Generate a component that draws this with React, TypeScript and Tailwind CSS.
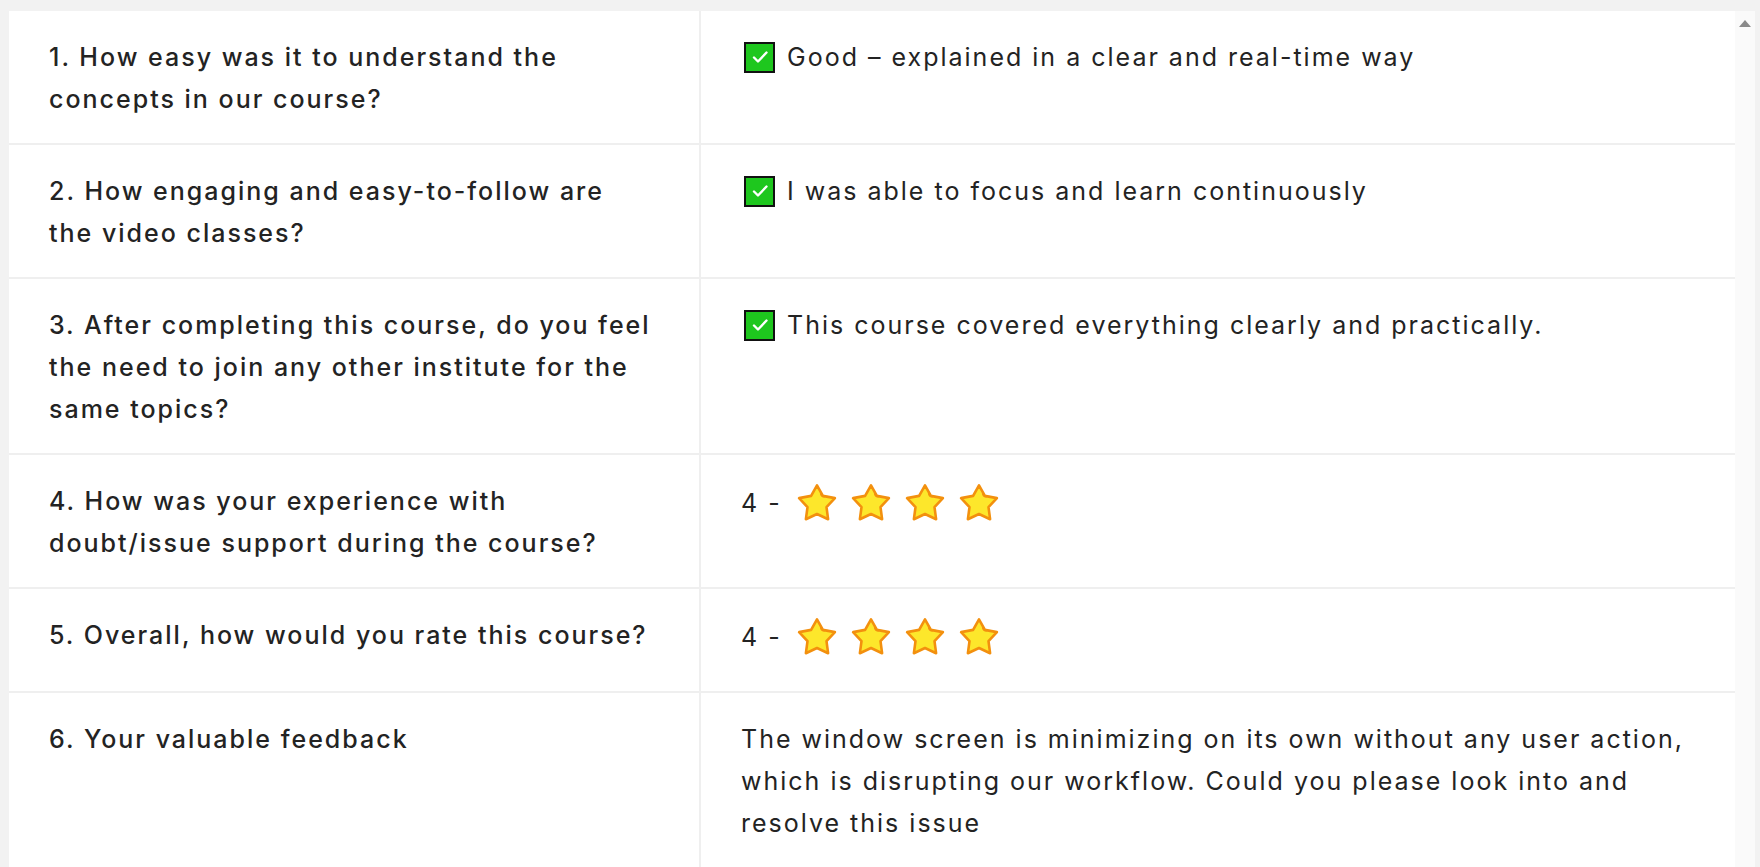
import { FC, ReactNode } from "react";

const Check: FC = () => (
  <span className="inline-flex w-[31px] h-[31px] shrink-0 items-center justify-center border-2 border-[#111] bg-[#1ec71e] ml-[3px] mr-[12px]">
    <svg width="20" height="20" viewBox="0 0 20 20" fill="none">
      <path
        d="M4 10.5l4 4L16.5 5.5"
        stroke="#fff"
        strokeWidth="2.4"
        strokeLinecap="round"
        strokeLinejoin="round"
      />
    </svg>
  </span>
);

const Star: FC = () => (
  <svg width="42" height="40" viewBox="0 0 42 40" fill="none">
    <path
      d="M21 2.4 L26.9 12.9 L38.9 15.1 L30.5 24.1 L32.1 36.2 L21 31 L9.9 36.2 L11.5 24.1 L3.1 15.1 L15.1 12.9 Z"
      fill="#fde72b"
      stroke="#f3900e"
      strokeWidth="2.6"
      strokeLinejoin="round"
    />
    <path
      d="M24.6 10.8 q0.3 3 3.9 3"
      stroke="#f3900e"
      strokeWidth="1.4"
      strokeLinecap="round"
    />
  </svg>
);

const Rating: FC<{ value: number }> = ({ value }) => (
  <div className="flex items-center h-[46px] mb-2">
    <span className="mr-[14px]">{value} -</span>
    <div className="flex items-center gap-[12px]">
      {Array.from({ length: value }).map((_, i) => (
        <Star key={i} />
      ))}
    </div>
  </div>
);

interface iRow {
  q: string;
  a: ReactNode;
  last?: boolean;
}

const Row: FC<iRow> = ({ q, a, last }) => (
  <div className={`flex ${last ? "" : "border-b-2 border-[#efefef]"}`}>
    <div className="w-[692px] shrink-0 border-r-2 border-[#efefef] pl-10 pr-[45px] pt-[25px] pb-[23px] font-medium">
      {q}
    </div>
    <div className="flex-1 pl-10 pr-10 pt-[25px] pb-[23px]">{a}</div>
  </div>
);

const App: FC = () => {
  const rows: iRow[] = [
    {
      q: "1. How easy was it to understand the concepts in our course?",
      a: (
        <div className="flex items-center">
          <Check />
          Good – explained in a clear and real-time way
        </div>
      ),
    },
    {
      q: "2. How engaging and easy-to-follow are the video classes?",
      a: (
        <div className="flex items-center">
          <Check />I was able to focus and learn continuously
        </div>
      ),
    },
    {
      q: "3. After completing this course, do you feel the need to join any other institute for the same topics?",
      a: (
        <div className="flex items-center">
          <Check />
          This course covered everything clearly and practically.
        </div>
      ),
    },
    {
      q: "4. How was your experience with doubt/issue support during the course?",
      a: <Rating value={4} />,
    },
    {
      q: "5. Overall, how would you rate this course?",
      a: <Rating value={4} />,
    },
    {
      q: "6. Your valuable feedback",
      a: "The window screen is minimizing on its own without any user action, which is disrupting our workflow. Could you please look into and resolve this issue",
      last: true,
    },
  ];

  return (
    <div
      className="h-screen overflow-hidden bg-[#f2f2f2] pt-[11px] pl-[9px] pr-[5px] flex text-[25px] leading-[42px] tracking-[2px] text-[#232323]"
      style={{ fontFamily: "Inter, 'Noto Sans', sans-serif" }}
    >
      <div className="flex-1 bg-white">
        {rows.map((r, i) => (
          <Row key={i} {...r} />
        ))}
      </div>
      <div className="w-[20px] bg-[#fafafa] relative">
        <div className="absolute left-[4px] top-[9px] w-0 h-0 border-l-[6px] border-r-[6px] border-b-[7px] border-l-transparent border-r-transparent border-b-[#8a8a8a]" />
      </div>
    </div>
  );
};

export default App;
